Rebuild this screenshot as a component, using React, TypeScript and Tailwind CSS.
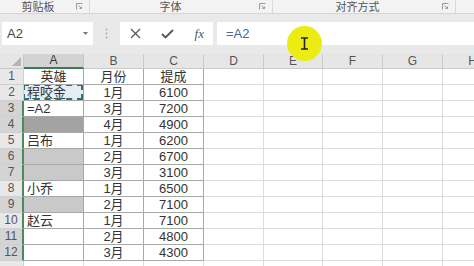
import React from "react"

const font = { fontFamily: '"Liberation Sans", "Noto Sans CJK SC", sans-serif' }

type Row = { n: number; a: string; b: string; c: string; sel?: boolean; fill?: string }

const rows: Row[] = [
  { n: 1, a: "英雄", b: "月份", c: "提成" },
  { n: 2, a: "程咬金", b: "1月", c: "6100" },
  { n: 3, a: "=A2", b: "3月", c: "7200", sel: true },
  { n: 4, a: "", b: "4月", c: "4900", sel: true, fill: "bg-[#a3a3a3]" },
  { n: 5, a: "吕布", b: "1月", c: "6200" },
  { n: 6, a: "", b: "2月", c: "6700", sel: true, fill: "bg-[#c9c9c9]" },
  { n: 7, a: "", b: "3月", c: "3100", sel: true, fill: "bg-[#c9c9c9]" },
  { n: 8, a: "小乔", b: "1月", c: "6500" },
  { n: 9, a: "", b: "2月", c: "7100", sel: true, fill: "bg-[#c9c9c9]" },
  { n: 10, a: "赵云", b: "1月", c: "7100" },
  { n: 11, a: "", b: "2月", c: "4800", sel: true },
  { n: 12, a: "", b: "3月", c: "4300", sel: true },
]

const Launcher = () => (
  <svg width="7" height="7" viewBox="0 0 7 7" className="shrink-0">
    <path d="M0.5 6.5V0.5H6.5" fill="none" stroke="#9a9a9a" strokeWidth="1" />
    <path d="M2.5 2.5L5.5 5.5M5.5 3.5V5.5H3.5" fill="none" stroke="#9a9a9a" strokeWidth="1" />
  </svg>
)

export default function App() {
  return (
    <div className="relative w-[474px] h-[266px] overflow-hidden bg-[#e9e9e9] text-[#333]" style={font}>
      {/* ribbon group labels */}
      <div className="flex h-[14px] bg-[#f3f3f3] border-b border-[#d6d6d6] text-[11px] leading-[14px] text-[#555]">
        <div className="flex w-[90px] items-center border-r border-[#dadada] pr-[6px]">
          <span className="w-[76px] text-center">剪贴板</span>
          <Launcher />
        </div>
        <div className="flex w-[183px] items-center border-r border-[#dadada] pr-[6px]">
          <span className="flex-1 text-center pr-[8px]">字体</span>
          <Launcher />
        </div>
        <div className="flex w-[183px] items-center border-r border-[#dadada] pr-[6px]">
          <span className="flex-1 text-center">对齐方式</span>
          <Launcher />
        </div>
      </div>

      {/* formula bar */}
      <div className="mt-[8px] flex h-[23px]">
        <div className="ml-[2px] flex w-[91px] items-center justify-between bg-white pl-[5px] pr-[5px] text-[13px] text-[#444]">
          <span>A2</span>
          <svg width="5" height="3" viewBox="0 0 5 3"><path d="M0 0H5L2.5 3Z" fill="#777" /></svg>
        </div>
        <div className="flex w-[27px] items-center justify-center">
          <svg width="3" height="11" viewBox="0 0 3 11">
            <circle cx="1.5" cy="1.5" r="0.9" fill="#aaa" />
            <circle cx="1.5" cy="5.5" r="0.9" fill="#aaa" />
            <circle cx="1.5" cy="9.5" r="0.9" fill="#aaa" />
          </svg>
        </div>
        <div className="flex w-[93px] items-center justify-between bg-white pl-[10px] pr-[9px]">
          <svg width="11" height="11" viewBox="0 0 11 11">
            <path d="M1 1L10 10M10 1L1 10" stroke="#555" strokeWidth="1.2" />
          </svg>
          <svg width="13" height="10" viewBox="0 0 13 10">
            <path d="M1 5L4.5 8.5L12 1" fill="none" stroke="#555" strokeWidth="1.8" />
          </svg>
          <span className="italic text-[13px] text-[#555]" style={{ fontFamily: '"Liberation Serif", serif' }}>fx</span>
        </div>
        <div className="ml-[4px] flex flex-1 items-center bg-white pl-[9px] text-[13px] text-[#4b64a0]">=A2</div>
      </div>

      {/* sheet */}
      <div className="mt-[9px] grid grid-cols-[24px_60px_60px_60px_60px_59px_60px_60px_60px] grid-rows-[15px_repeat(13,16px)] text-[13px] leading-[15px]">
        <div className="flex items-end justify-end border-r border-b border-[#c8c8c8] bg-[#e6e6e6] pr-[2px] pb-[2px]">
          <svg width="9" height="9" viewBox="0 0 9 9"><path d="M9 0V9H0Z" fill="#b5b5b5" /></svg>
        </div>
        {["A", "B", "C", "D", "E", "F", "G", "H"].map((c) => (
          <div
            key={c}
            className={
              c === "A"
                ? "flex items-center justify-center border-r border-b-2 border-r-[#c4c4c4] border-b-[#3c7a52] bg-[#d3d3d3] text-[12px] text-[#3a3a3a]"
                : "flex items-center justify-center border-r border-b border-[#cbcbcb] bg-[#e6e6e6] text-[12px] text-[#555]"
            }
          >
            {c}
          </div>
        ))}

        {rows.map((r) => (
          <React.Fragment key={r.n}>
            <div
              className={
                r.n >= 3
                  ? `flex items-center justify-center border-r-2 border-b border-r-[#4b8a5e] border-b-[#cfcfcf] text-[12px] text-[#555] ${r.sel ? "bg-[#d4d4d4]" : "bg-[#e8e8e8]"}`
                  : "flex items-center justify-center border-r border-b border-[#cfcfcf] bg-[#e8e8e8] text-[12px] text-[#555]"
              }
            >
              {r.n}
            </div>
            <div
              className={`relative flex items-center overflow-hidden whitespace-nowrap border-r border-b border-[#a8a8a8] ${r.n === 1 ? "justify-center" : "pl-[3px]"} ${r.n === 2 ? "bg-[#e6edf7]" : r.fill ?? "bg-white"}`}
            >
              {r.a}
              {r.n === 2 && <div className="absolute -top-px -left-px right-0 bottom-0 border-2 border-dashed border-[#2a7272]" />}
            </div>
            <div className="flex items-center justify-center border-r border-b border-[#a8a8a8] bg-white">{r.b}</div>
            <div className="flex items-center justify-center border-r border-b border-[#a8a8a8] bg-white">{r.c}</div>
            {[0, 1, 2, 3, 4].map((i) => (
              <div key={i} className="border-r border-b border-[#dcdcdc] bg-white" />
            ))}
          </React.Fragment>
        ))}

        <div className="border-r border-[#cfcfcf] bg-[#e8e8e8]" />
        {[0, 1, 2, 3, 4, 5, 6, 7].map((i) => (
          <div key={i} className="border-r border-[#dcdcdc] bg-white" />
        ))}
      </div>

      {/* cursor highlight */}
      <div className="absolute left-[287px] top-[26px] flex h-[35px] w-[35px] items-center justify-center rounded-full bg-[#ecec12]">
        <svg width="9" height="13" viewBox="0 0 9 13">
          <path d="M1 1H8M4.5 1V12M1 12H8" stroke="#222" strokeWidth="1.6" fill="none" />
        </svg>
      </div>
    </div>
  )
}
